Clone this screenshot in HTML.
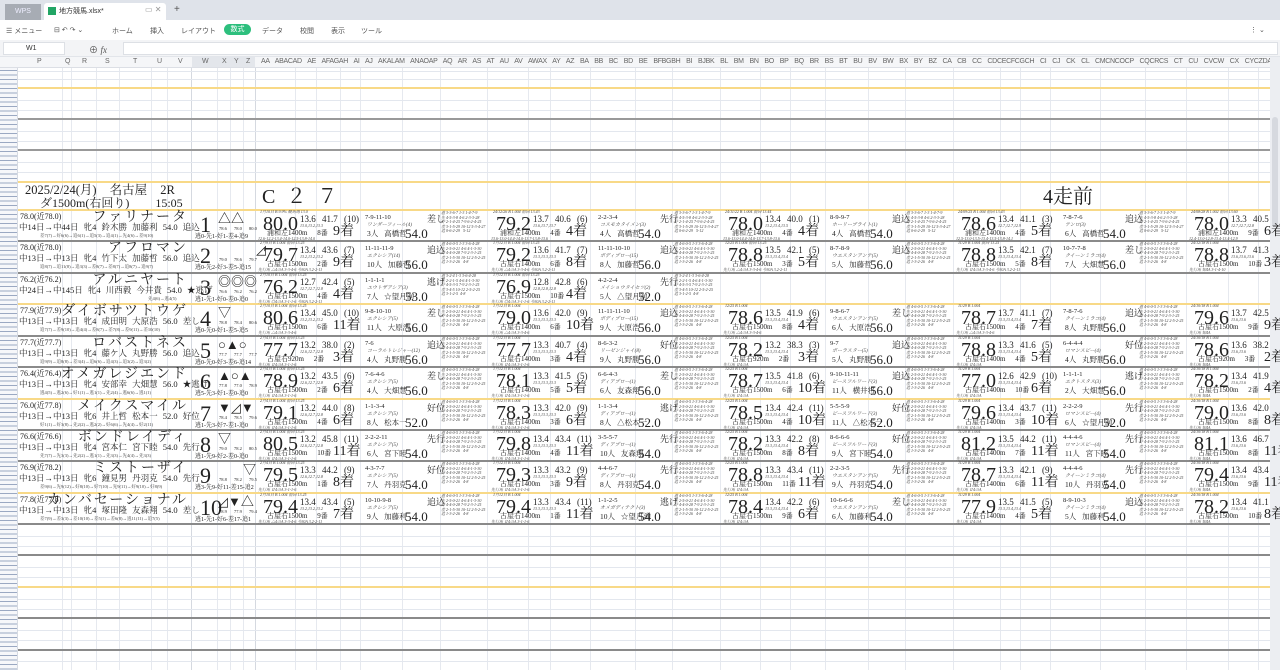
<!DOCTYPE html>
<html><head><meta charset="utf-8"><style>
*{margin:0;padding:0;box-sizing:border-box}
body{width:1280px;height:670px;overflow:hidden;background:#fff;font-family:"Liberation Sans","Noto Sans CJK JP",sans-serif;position:relative}
b{font-weight:normal}
.abs{position:absolute}
#tabs{left:0;top:0;width:1280px;height:20px;background:#dfe3ea}
#menu{left:0;top:20px;width:1280px;height:20px;background:#fff;font-size:7px;color:#555}
#menu span{position:absolute;top:6px}
#fx{left:0;top:40px;width:1280px;height:17px;background:#f3f4f6;border-bottom:1px solid #e2e5ea}
#colh{left:0;top:57px;width:1270px;height:11px;background:#f5f6f8;border-bottom:1px solid #dcdfe5;font-size:7px;color:#666;overflow:hidden;white-space:nowrap}
#colh span{position:absolute;top:1px}
#rown{left:0;top:68px;width:18px;height:602px;background:repeating-linear-gradient(#f6f7fa 0 2px,#9aa8c2 2px 3px,#f6f7fa 3px 4.5px);border-right:1px solid #d6dae2}
.hl{position:absolute;left:18px;width:1252px;height:1px;background:#e3e7ee}
.y{height:2px;background:#f8d987}
.g{height:2px;background:#8a8a8a}
.vl{position:absolute;top:68px;width:1px;height:602px;background:#e6e9ef}
.t{position:absolute;font-family:"Liberation Serif","Noto Serif CJK SC",serif;color:#222;white-space:nowrap;line-height:1}
.hr{position:absolute;left:18px;width:1252px;height:31px}
.hr .s1{left:2px;top:3px;font-size:8px}
.hr .nm{right:1082px;top:1px;font-size:14px;letter-spacing:2px}
.hr .no{left:182px;top:4px;font-size:22px}
.hr .mk{left:200px;top:2px;font-size:13px}
.hr .mv{left:201px;top:17px;font-size:4.5px;word-spacing:6px}
.hr .l2{left:1px;top:13px;font-size:8.5px;word-spacing:3px}
.hr .l3{left:22px;top:24px;font-size:4.5px;color:#444}
.hr .l4{left:177px;top:24px;font-size:6px}
.b{position:absolute;width:232px;height:31px;overflow:hidden}
.b .h{left:5px;top:0;font-size:4px;color:#444}
.b .r{left:8px;top:4px;font-size:20px}
.b .a{left:45px;top:5px;font-size:9px;word-spacing:4px}
.b .e{left:45px;top:14px;font-size:4px;color:#444}
.b .f{left:110px;top:5px;font-size:6.5px}
.b .gg{left:172px;top:5px;font-size:9px}
.b .k{left:112px;top:13px;font-size:5px;color:#444}
.b .l{left:12px;top:20px;font-size:7px;word-spacing:8px}
.b .n{left:78px;top:15px;font-size:14px}
.b .o{left:112px;top:20px;font-size:7.5px;word-spacing:4px}
.b .p{left:150px;top:17px;font-size:13px}
.b .q{left:3px;top:27px;font-size:4px;color:#444}
.b .z{left:186px;top:1px;width:46px;height:28px;font-size:4px;line-height:4.6px;color:#444;white-space:pre}
</style></head><body>
<div id="tabs" class="abs">
 <div class="abs" style="left:5px;top:4px;width:36px;height:16px;background:#a7acb4;color:#eef;font-size:7px;text-align:center;line-height:16px">WPS</div>
 <div class="abs" style="left:44px;top:3px;width:122px;height:17px;background:#fff;border-radius:3px 3px 0 0"></div>
 <div class="abs" style="left:48px;top:7px;width:8px;height:8px;background:#22a565"></div>
 <div class="abs" style="left:59px;top:6px;font-size:7px;color:#333">地方競馬.xlsx*</div>
 <div class="abs" style="left:145px;top:5px;font-size:8px;color:#999">▭ ✕</div>
 <div class="abs" style="left:174px;top:4px;font-size:10px;color:#555">+</div>
</div>
<div id="menu" class="abs">
 <span style="left:6px">☰ メニュー</span><span style="left:54px">⊟ ↶ ↷ ⌄</span>
 <span style="left:112px">ホーム</span><span style="left:150px">挿入</span><span style="left:181px">レイアウト</span>
 <span style="left:224px;top:4px;width:27px;height:11px;background:#2dbf7d;border-radius:6px;color:#fff;text-align:center;line-height:11px">数式</span>
 <span style="left:262px">データ</span><span style="left:300px">校閲</span><span style="left:331px">表示</span><span style="left:361px">ツール</span>
 <span style="left:1250px">⋮ ⌄</span>
</div>
<div id="fx" class="abs">
 <div class="abs" style="left:3px;top:2px;width:62px;height:13px;background:#fff;border:1px solid #dde0e5;font-size:7px;color:#333;padding-left:22px;line-height:11px">W1</div>
 <div class="abs" style="left:89px;top:3px;font-size:9px;color:#555">⊕ <i style="font-family:'Liberation Serif'">fx</i></div>
 <div class="abs" style="left:123px;top:2px;width:1155px;height:13px;background:#fff;border:1px solid #dde0e5"></div>
</div>
<div id="colh" class="abs">
 <div class="abs" style="left:192px;top:0;width:63px;height:11px;background:#e3e6eb;border-bottom:1.5px solid #2dbf7d"></div>
 <span style="left:37px">P</span><span style="left:65px">Q</span><span style="left:82px">R</span><span style="left:105px">S</span><span style="left:133px">T</span><span style="left:157px">U</span><span style="left:178px">V</span><span style="left:202px">W</span><span style="left:222px">X</span><span style="left:234px">Y</span><span style="left:246px">Z</span>
 <span style="left:261px;letter-spacing:-.3px;word-spacing:4.2px">AA ABACAD AE AFAGAH AI AJ AKALAM ANAOAP AQ AR AS AT AU AV AWAX AY AZ BA BB BC BD BE BFBGBH BI BJBK BL BM BN BO BP BQ BR BS BT BU BV BW BX BY BZ CA CB CC CDCECFCGCH CI CJ CK CL CMCNCOCP CQCRCS CT CU CVCW CX CYCZDADBDC DD DE DF DG DH DI DJ DK DLDMDN</span>
</div>
<div id="rown" class="abs"></div>
<div class="abs" style="left:1270px;top:57px;width:10px;height:613px;background:#eceef2"><div class="abs" style="left:2px;top:60px;width:6px;height:110px;background:#d6d9df;border-radius:3px"></div></div>

<div class="vl" style="left:62px"></div><div class="vl" style="left:71px"></div><div class="vl" style="left:96px"></div><div class="vl" style="left:119px"></div><div class="vl" style="left:151px"></div><div class="vl" style="left:167px"></div><div class="vl" style="left:191px;background:#d5d9e0"></div><div class="vl" style="left:217px"></div><div class="vl" style="left:230px"></div><div class="vl" style="left:243px"></div><div class="vl" style="left:255px;background:#d5d9e0"></div>
<div class="vl" style="left:295px"></div><div class="vl" style="left:316px"></div><div class="vl" style="left:340px"></div><div class="vl" style="left:360px"></div><div class="vl" style="left:402px"></div><div class="vl" style="left:440px"></div><div class="vl" style="left:487px"></div>
<div class="vl" style="left:528px"></div><div class="vl" style="left:550px"></div><div class="vl" style="left:590px"></div><div class="vl" style="left:635px"></div><div class="vl" style="left:672px"></div><div class="vl" style="left:720px"></div>
<div class="vl" style="left:760px"></div><div class="vl" style="left:790px"></div><div class="vl" style="left:825px"></div><div class="vl" style="left:868px"></div><div class="vl" style="left:905px"></div><div class="vl" style="left:953px"></div>
<div class="vl" style="left:1000px"></div><div class="vl" style="left:1020px"></div><div class="vl" style="left:1050px"></div><div class="vl" style="left:1100px"></div><div class="vl" style="left:1145px"></div><div class="vl" style="left:1186px"></div><div class="vl" style="left:1228px"></div><div class="vl" style="left:1258px"></div>

<div class="hl" style="top:71px"></div><div class="hl" style="top:79px"></div><div class="hl" style="top:100px"></div><div class="hl" style="top:110px"></div><div class="hl" style="top:131px"></div><div class="hl" style="top:141px"></div><div class="hl" style="top:162px"></div><div class="hl" style="top:172px"></div>
<div class="hl" style="top:536px"></div><div class="hl" style="top:546px"></div><div class="hl" style="top:567px"></div><div class="hl" style="top:577px"></div><div class="hl" style="top:599px"></div><div class="hl" style="top:609px"></div><div class="hl" style="top:630px"></div><div class="hl" style="top:640px"></div><div class="hl" style="top:661px"></div>

<div class="hl y" style="top:87px"></div><div class="hl g" style="top:118px;background:#999"></div><div class="hl g" style="top:149px;background:#999"></div><div class="hl y" style="top:181px"></div>
<div class="hl y" style="top:209px"></div><div class="hl g" style="top:240px"></div><div class="hl g" style="top:272px"></div><div class="hl y" style="top:303px"></div><div class="hl g" style="top:335px"></div><div class="hl g" style="top:366px"></div><div class="hl y" style="top:398px"></div><div class="hl g" style="top:429px"></div><div class="hl g" style="top:460px"></div><div class="hl y" style="top:492px"></div><div class="hl g" style="top:523px"></div><div class="hl g" style="top:554px"></div><div class="hl y" style="top:586px"></div><div class="hl g" style="top:617px"></div><div class="hl g" style="top:649px"></div>

<div class="t" style="left:25px;top:184px;font-size:12.5px;word-spacing:10px">2025/2/24(月) 名古屋 2R</div>
<div class="t" style="left:40px;top:197px;font-size:12px">ダ1500m(右回り)<span style="margin-left:26px">15:05</span></div>
<div class="t" style="left:262px;top:187px;font-size:20px;letter-spacing:11px">C２７</div>
<div class="t" style="left:1043px;top:187px;font-size:20px">4走前</div>

<div class="hr" style="top:210px"><span class="t s1">78.0(近78.0)</span><span class="t nm">ファリナータ</span><span class="t no">1</span><span class="t mk">△△</span><span class="t mv">78.6 78.0 80.0</span><span class="t l2">中14日→中44日 牝4 鈴木勝 加藤利 54.0 追込</span><span class="t l3">差7(7)→好6(6)→追6(1)→追5(3)→追4(1)→先4(6)→差9(10)</span><span class="t l4">逃0-先1-好1-差4-追9</span></div>
<div class="hr" style="top:241px"><span class="t s1">78.0(近78.0)</span><span class="t nm">アフロマン</span><span class="t no">2</span><span class="t mk" style="left:238px">◿</span><span class="t mv">79.0 78.6 79.7</span><span class="t l2">中13日→中13日 牝4 竹下太 加藤哲 56.0 追込</span><span class="t l3">追8(7)→追11(8)→追3(3)→差8(7)→差8(7)→追8(7)→追9(7)</span><span class="t l4">逃0-先2-好3-差5-追15</span></div>
<div class="hr" style="top:273px"><span class="t s1">76.2(近76.2)</span><span class="t nm">アルニヤート</span><span class="t no">3</span><span class="t mk">◎◎◎</span><span class="t mv">76.6 76.2 76.2</span><span class="t l2">中24日→中145日 牝4 川西毅 今井貴 54.0 ★逃げ</span><span class="t l3" style="left:130px">先4(6)→逃4(5)</span><span class="t l4">逃1-先1-好0-差0-追0</span></div>
<div class="hr" style="top:304px"><span class="t s1">77.9(近77.9)</span><span class="t nm">ダイボサツトウゲ</span><span class="t no">4</span><span class="t mk">▽</span><span class="t mv">78.8 78.4 80.6</span><span class="t l2">中13日→中13日 牝4 成田明 大原浩 56.0 差し</span><span class="t l3">追7(7)→差9(10)→追4(4)→差8(7)→差7(8)→差9(11)→差10(10)</span><span class="t l4">逃0-先0-好1-差5-追5</span></div>
<div class="hr" style="top:336px"><span class="t s1">77.7(近77.7)</span><span class="t nm">ロバストネス</span><span class="t no">5</span><span class="t mk">○▲○</span><span class="t mv">77.7 77.7 77.7</span><span class="t l2">中13日→中13日 牝4 藤ケ人 丸野勝 56.0 追込</span><span class="t l3">追9(9)→追8(8)→差3(4)→追6(6)→追4(3)→追3(2)→追3(2)</span><span class="t l4">逃0-先0-好3-差6-追14</span></div>
<div class="hr" style="top:367px"><span class="t s1">76.4(近76.4)</span><span class="t nm">オメガレジエンド</span><span class="t no">6</span><span class="t mk">▲○▲</span><span class="t mv">77.8 77.0 78.9</span><span class="t l2">中13日→中13日 牝4 安部幸 大畑慧 56.0 ★逃げ</span><span class="t l3">逃4(5)→逃2(6)→好1(1)→逃1(1)→先2(4)→逃6(6)→逃1(1)</span><span class="t l4">逃5-先3-好1-差0-追0</span></div>
<div class="hr" style="top:399px"><span class="t s1">76.0(近77.8)</span><span class="t nm">メイクスマイル</span><span class="t no">7</span><span class="t mk">▼◿▼</span><span class="t mv">78.4 78.5 79.6</span><span class="t l2">中13日→中13日 牝6 井上哲 松本一 52.0 好位</span><span class="t l3">好1(1)→好3(8)→先2(2)→逃2(2)→好6(6)→先4(4)→好2(11)</span><span class="t l4">逃1-先3-好7-差1-追0</span></div>
<div class="hr" style="top:430px"><span class="t s1">76.6(近76.6)</span><span class="t nm">ボンドレイディ</span><span class="t no">8</span><span class="t mk">▽</span><span class="t mv">79.0 78.2 80.5</span><span class="t l2">中13日→中13日 牝4 宮本仁 宮下睦 54.0 先行</span><span class="t l3">先7(7)→先3(3)→先2(2)→逃1(1)→先3(3)→先4(4)→先3(3)</span><span class="t l4">逃1-先9-好2-差0-追0</span></div>
<div class="hr" style="top:461px"><span class="t s1">76.9(近78.2)</span><span class="t nm">ミストーザイ</span><span class="t no">9</span><span class="t mk" style="left:225px">▽</span><span class="t mv">78.8 78.2 79.5</span><span class="t l2">中13日→中13日 牝6 鐘見男 丹羽克 54.0 先行</span><span class="t l3">差9(6)→先9(12)→好8(10)→好7(10)→先9(11)→好9(10)→好8(9)</span><span class="t l4">逃3-先9-好11-差15-追2</span></div>
<div class="hr" style="top:493px"><span class="t s1">77.8(近77.8)</span><span class="t nm">カンバセーショナル</span><span class="t no">10</span><span class="t mk">◿▼△</span><span class="t mv">78.9 77.9 79.4</span><span class="t l2">中13日→中13日 牝4 塚田隆 友森翔 54.0 差し</span><span class="t l3">差7(9)→差3(3)→差10(10)→差5(1)→差6(8)→逃11(11)→追7(5)</span><span class="t l4">逃1-先1-好6-差17-追1</span></div>

<div class="b" style="left:255px;top:210px"><i class="t h">1月10日 B 9.9% 競馬場 13.0</i><b class="t r">80.0</b><span class="t a">13.6 41.7 (10)</span><i class="t e">13.0,13.2,13.3</i><span class="t f">7-9-11-10</span><span class="t gg">差し</span><i class="t k">ワンダーフィール(4)</i><span class="t l">浦和左1400m 8番</span><b class="t n">9着</b><span class="t o">3人 高橋哲</span><b class="t p">54.0</b><i class="t q">12.6-12.2-13.4-14.0-12.5-13.8-14.0</i><i class="t z">逃 3-3-6-7 1-3 1-4-7-9
先 4-5-3-8 4-6 2-3-3-28
好 2-1-4-25 7-9 6-2-4-25
差 3-1-5-29 10-12 5-3-4-27
追 0-6-2-29   5-12</i></div>
<div class="b" style="left:488px;top:210px"><i class="t h">24/12/26 B 1.004 前回 13.43</i><b class="t r">79.2</b><span class="t a">13.7 40.6 (6)</span><i class="t e">13.6,13.7,13.7</i><span class="t f">2-2-3-4</span><span class="t gg">先行</span><i class="t k">コスモカタイメン(3)</i><span class="t l">浦和左1400m 4番</span><b class="t n">4着</b><span class="t o">4人 高橋哲</span><b class="t p">54.0</b><i class="t q">13.6-13.0-14.4-14.0-13.7-13.8-13.6</i><i class="t z">逃 3-3-6-7 1-3 1-4-7-9
先 4-5-3-8 4-6 2-3-3-28
好 2-1-4-25 7-9 6-2-4-25
差 3-1-5-29 10-12 5-3-4-27
追 0-6-2-29   5-12</i></div>
<div class="b" style="left:720px;top:210px"><i class="t h">24/11/22 B 1.004 前回 13.44</i><b class="t r">78.0</b><span class="t a">13.4 40.0 (1)</span><i class="t e">13.2,13.4,13.5</i><span class="t f">8-9-9-7</span><span class="t gg">追込</span><i class="t k">ホーリーブライト(1)</i><span class="t l">浦和左1400m 4番</span><b class="t n">4着</b><span class="t o">4人 高橋哲</span><b class="t p">54.0</b><i class="t q">13.6-13.0-14.4-14.0-13.7-13.8-13.6</i><i class="t z">逃 3-3-6-7 1-3 1-4-7-9
先 4-5-3-8 4-6 2-3-3-28
好 2-1-4-25 7-9 6-2-4-25
差 3-1-5-29 10-12 5-3-4-27
追 0-6-2-29   5-12</i></div>
<div class="b" style="left:953px;top:210px"><i class="t h">24/09/25 B 1.004 前回 13.43</i><b class="t r">78.6</b><span class="t a">13.4 41.1 (3)</span><i class="t e">12.7,12.7,12.9</i><span class="t f">7-8-7-6</span><span class="t gg">追込</span><i class="t k">テンロ(3)</i><span class="t l">浦和左1400m 4番</span><b class="t n">5着</b><span class="t o">6人 高橋哲</span><b class="t p">54.0</b><i class="t q">12.5-13.0-13.5-13.4-13.5-13.8-14.1</i><i class="t z">逃 3-3-6-7 1-3 1-4-7-9
先 4-5-3-8 4-6 2-3-3-28
好 2-1-4-25 7-9 6-2-4-25
差 3-1-5-29 10-12 5-3-4-27
追 0-6-2-29   5-12</i></div>
<div class="b" style="left:1186px;top:210px"><i class="t h">24/08/28 B 1.002 前回 13.60</i><b class="t r">78.0</b><span class="t a">13.3 40.5</span><i class="t e">12.7,12.7,12.8</i><span class="t l">浦和左1400m 9番</span><b class="t n">6着</b><i class="t q">12.4-13.0-12.8-13.4-13.4-12.9</i></div>

<div class="b" style="left:255px;top:241px"><i class="t h">2月9日 B 1.004 前回 13.25</i><b class="t r">79.7</b><span class="t a">13.4 43.6 (7)</span><i class="t e">13.2,13.2,13.2</i><span class="t f">11-11-11-9</span><span class="t gg">追込</span><i class="t k">エクレシア(14)</i><span class="t l">古屋右1500m 2番</span><b class="t n">9着</b><span class="t o">10人 加藤哲</span><b class="t p">56.0</b><i class="t q">先行馬 △4のA 3-3-4-6 今30A 3.2-2-11</i><i class="t z">逃 4-6-0-5 1-3 3-6-4-28
先 2-5-0-21 4-6 4-1-3-30
好 4-4-0-28 7-9 2-3-1-25
差 2-1-5-30 10-12 2-5-2-25
追 1-3-2-26   4-8</i></div>
<div class="b" style="left:488px;top:241px"><i class="t h">1月12日 B 1.004 前回 13.25</i><b class="t r">79.2</b><span class="t a">13.6 41.7 (7)</span><i class="t e">13.3,13.3,13.3</i><span class="t f">11-11-10-10</span><span class="t gg">追込</span><i class="t k">ボディプロー(15)</i><span class="t l">古屋右1400m 6番</span><b class="t n">8着</b><span class="t o">8人 加藤哲</span><b class="t p">56.0</b><i class="t q">先行馬 △4のA 3-3-4-6 今30A 3.2-2-11</i><i class="t z">逃 4-6-0-5 1-3 3-6-4-28
先 2-5-0-21 4-6 4-1-3-30
好 4-4-0-28 7-9 2-3-1-25
差 2-1-5-30 10-12 2-5-2-25
追 1-3-2-26   4-8</i></div>
<div class="b" style="left:720px;top:241px"><i class="t h">12/25 B 1.004 前回 13.25</i><b class="t r">78.8</b><span class="t a">13.5 42.1 (5)</span><i class="t e">13.3,13.4,13.4</i><span class="t f">8-7-8-9</span><span class="t gg">追込</span><i class="t k">ウエスタンアンテ(5)</i><span class="t l">古屋右1500m 3番</span><b class="t n">5着</b><span class="t o">5人 加藤哲</span><b class="t p">56.0</b><i class="t q">先行馬 △4のA 3-3-4-6 今30A 3.2-2-11</i><i class="t z">逃 4-6-0-5 1-3 3-6-4-28
先 2-5-0-21 4-6 4-1-3-30
好 4-4-0-28 7-9 2-3-1-25
差 2-1-5-30 10-12 2-5-2-25
追 1-3-2-26   4-8</i></div>
<div class="b" style="left:953px;top:241px"><i class="t h">11/29 B 1.004 前回 13.25</i><b class="t r">78.8</b><span class="t a">13.5 42.1 (7)</span><i class="t e">13.3,13.4,13.4</i><span class="t f">10-7-7-8</span><span class="t gg">差し</span><i class="t k">クイーンミラコ(4)</i><span class="t l">古屋右1500m 5番</span><b class="t n">8着</b><span class="t o">7人 大畑慧</span><b class="t p">56.0</b><i class="t q">先行馬 Ⅱ4のA 3-3-4-6 今30A 3.2-2-11</i><i class="t z">逃 4-6-0-5 1-3 3-6-4-28
先 2-5-0-21 4-6 4-1-3-30
好 4-4-0-28 7-9 2-3-1-25
差 2-1-5-30 10-12 2-5-2-25
追 1-3-2-26   4-8</i></div>
<div class="b" style="left:1186px;top:241px"><i class="t h">24/12/18 B 1.004</i><b class="t r">78.8</b><span class="t a">13.7 41.3</span><i class="t e">13.6,13.6,13.6</i><span class="t l">古屋右1500m 10番</span><b class="t n">3着</b><i class="t q">先行馬 知4A 3-1-4-10</i></div>

<div class="b" style="left:255px;top:273px"><i class="t h">2月10日 B 1.004 前回 13.25</i><b class="t r">76.2</b><span class="t a">12.7 42.4 (5)</span><i class="t e">12.7,12.7,12.8</i><span class="t f">1-1-1-1</span><span class="t gg">逃げ</span><i class="t k">ユウトザアシア(3)</i><span class="t l">古屋右1500m 4番</span><b class="t n">4着</b><span class="t o">7人 ☆望月洵</span><b class="t p">53.0</b><i class="t q">先行馬 ◎4のA 3-1-1-6 今30A 3.2-2-11</i><i class="t z">逃 3-2-4 1-3 3-6-4-28
先 2-2-1-5 4-6 4-1-3-30
好 4-5-3-5 7-9 2-3-1-25
差 3-4-5 10-12 2-5-2-25
追 3-1-2-5  4-8</i></div>
<div class="b" style="left:488px;top:273px"><i class="t h">1月12日 B 1.004 前回 13.25</i><b class="t r">76.9</b><span class="t a">12.8 42.8 (6)</span><i class="t e">12.8,12.8,12.8</i><span class="t f">4-2-2-4</span><span class="t gg">先行</span><i class="t k">メイショウタイセツ(2)</i><span class="t l">古屋右1500m 10番</span><b class="t n">4着</b><span class="t o">5人 △望月洵</span><b class="t p">52.0</b><i class="t q">先行馬 ◎4のA 3-1-1-6 今30A 3.2-2-11</i><i class="t z">逃 3-2-4 1-3 3-6-4-28
先 2-2-1-5 4-6 4-1-3-30
好 4-5-3-5 7-9 2-3-1-25
差 3-4-5 10-12 2-5-2-25
追 3-1-2-5  4-8</i></div>

<div class="b" style="left:255px;top:304px"><i class="t h">2月10日 B 1.004 前回 13.25</i><b class="t r">80.6</b><span class="t a">13.4 45.0 (10)</span><i class="t e">13.2,13.2,13.2</i><span class="t f">9-8-10-10</span><span class="t gg">差し</span><i class="t k">エクレシア(5)</i><span class="t l">古屋右1500m 6番</span><b class="t n">11着</b><span class="t o">11人 大原浩</span><b class="t p">56.0</b><i class="t q">先行馬 △4のA 3-3-4-6</i><i class="t z">逃 4-6-0-5 1-3 3-6-4-28
先 2-5-0-21 4-6 4-1-3-30
好 4-4-0-28 7-9 2-3-1-25
差 2-1-5-30 10-12 2-5-2-25
追 1-3-2-26   4-8</i></div>
<div class="b" style="left:488px;top:304px"><i class="t h">1月12日 B 1.004</i><b class="t r">79.0</b><span class="t a">13.6 42.0 (9)</span><i class="t e">13.3,13.3,13.3</i><span class="t f">11-11-11-10</span><span class="t gg">追込</span><i class="t k">ボディプロー(15)</i><span class="t l">古屋右1400m 6番</span><b class="t n">10着</b><span class="t o">9人 大原浩</span><b class="t p">56.0</b><i class="t q">先行馬 △4のA 3-3-4-6</i><i class="t z">逃 4-6-0-5 1-3 3-6-4-28
先 2-5-0-21 4-6 4-1-3-30
好 4-4-0-28 7-9 2-3-1-25
差 2-1-5-30 10-12 2-5-2-25
追 1-3-2-26   4-8</i></div>
<div class="b" style="left:720px;top:304px"><i class="t h">12/25 B 1.004</i><b class="t r">78.6</b><span class="t a">13.5 41.9 (6)</span><i class="t e">13.3,13.4,13.4</i><span class="t f">9-8-6-7</span><span class="t gg">差し</span><i class="t k">ウエスタンアンテ(5)</i><span class="t l">古屋右1500m 8番</span><b class="t n">4着</b><span class="t o">6人 大原浩</span><b class="t p">56.0</b><i class="t q">先行馬 △4のA 3-3-4-6</i><i class="t z">逃 4-6-0-5 1-3 3-6-4-28
先 2-5-0-21 4-6 4-1-3-30
好 4-4-0-28 7-9 2-3-1-25
差 2-1-5-30 10-12 2-5-2-25
追 1-3-2-26   4-8</i></div>
<div class="b" style="left:953px;top:304px"><i class="t h">11/29 B 1.004</i><b class="t r">78.7</b><span class="t a">13.7 41.1 (7)</span><i class="t e">13.3,13.4,13.4</i><span class="t f">7-8-7-6</span><span class="t gg">追込</span><i class="t k">クイーンミラコ(4)</i><span class="t l">古屋右1500m 4番</span><b class="t n">7着</b><span class="t o">8人 丸野勝</span><b class="t p">56.0</b><i class="t q">先行馬 △4のA 3-3-4-6</i><i class="t z">逃 4-6-0-5 1-3 3-6-4-28
先 2-5-0-21 4-6 4-1-3-30
好 4-4-0-28 7-9 2-3-1-25
差 2-1-5-30 10-12 2-5-2-25
追 1-3-2-26   4-8</i></div>
<div class="b" style="left:1186px;top:304px"><i class="t h">24/10/18 B 1.004</i><b class="t r">79.6</b><span class="t a">13.7 42.5</span><i class="t e">13.6,13.6</i><span class="t l">古屋右1500m 9番</span><b class="t n">9着</b><i class="t q">先行馬 知4A</i></div>

<div class="b" style="left:255px;top:336px"><i class="t h">2月4日 B 1.004 前回 13.25</i><b class="t r">77.7</b><span class="t a">13.2 38.0 (2)</span><i class="t e">12.6,12.7,12.8</i><span class="t f">7-6</span><span class="t gg">追込</span><i class="t k">コーラルトレジャー(12)</i><span class="t l">古屋右920m 2番</span><b class="t n">3着</b><span class="t o">4人 丸野勝</span><b class="t p">56.0</b><i class="t q">先行馬 Ⅱ4のA 3-1-1-6</i><i class="t z">逃 4-6-0-5 1-3 3-6-4-28
先 2-5-0-21 4-6 4-1-3-30
好 4-4-0-28 7-9 2-3-1-25
差 2-1-5-30 10-12 2-5-2-25
追 1-3-2-26   4-8</i></div>
<div class="b" style="left:488px;top:336px"><i class="t h">1月12日 B 1.004</i><b class="t r">77.7</b><span class="t a">13.3 40.7 (4)</span><i class="t e">13.3,13.3,13.3</i><span class="t f">8-6-3-2</span><span class="t gg">好位</span><i class="t k">リーゼンジャイ(8)</i><span class="t l">古屋右1400m 3番</span><b class="t n">4着</b><span class="t o">9人 丸野勝</span><b class="t p">56.0</b><i class="t q">先行馬 Ⅱ4のA 3-1-1-6</i><i class="t z">逃 4-6-0-5 1-3 3-6-4-28
先 2-5-0-21 4-6 4-1-3-30
好 4-4-0-28 7-9 2-3-1-25
差 2-1-5-30 10-12 2-5-2-25
追 1-3-2-26   4-8</i></div>
<div class="b" style="left:720px;top:336px"><i class="t h">12/25 B 1.004</i><b class="t r">78.2</b><span class="t a">13.2 38.3 (3)</span><i class="t e">13.3,13.4,13.4</i><span class="t f">9-7</span><span class="t gg">追込</span><i class="t k">ボーラスター(5)</i><span class="t l">古屋右920m 2番</span><b class="t n">3着</b><span class="t o">5人 丸野勝</span><b class="t p">56.0</b><i class="t q">先行馬 Ⅱ4のA</i><i class="t z">逃 4-6-0-5 1-3 3-6-4-28
先 2-5-0-21 4-6 4-1-3-30
好 4-4-0-28 7-9 2-3-1-25
差 2-1-5-30 10-12 2-5-2-25
追 1-3-2-26   4-8</i></div>
<div class="b" style="left:953px;top:336px"><i class="t h">11/29 B 1.004</i><b class="t r">78.8</b><span class="t a">13.3 41.6 (5)</span><i class="t e">13.3,13.4,13.4</i><span class="t f">6-4-4-4</span><span class="t gg">好位</span><i class="t k">ロマンスビー(4)</i><span class="t l">古屋右1400m 4番</span><b class="t n">5着</b><span class="t o">4人 丸野勝</span><b class="t p">56.0</b><i class="t q">先行馬 Ⅱ4のA</i><i class="t z">逃 4-6-0-5 1-3 3-6-4-28
先 2-5-0-21 4-6 4-1-3-30
好 4-4-0-28 7-9 2-3-1-25
差 2-1-5-30 10-12 2-5-2-25
追 1-3-2-26   4-8</i></div>
<div class="b" style="left:1186px;top:336px"><i class="t h">24/10/18 B 1.004</i><b class="t r">78.6</b><span class="t a">13.6 38.2</span><i class="t e">13.6,13.6</i><span class="t l">古屋右920m 3番</span><b class="t n">2着</b><i class="t q">先行馬 知4A</i></div>

<div class="b" style="left:255px;top:367px"><i class="t h">2月4日 B 1.004 前回 13.25</i><b class="t r">78.9</b><span class="t a">13.2 43.5 (6)</span><i class="t e">12.6,12.7,12.8</i><span class="t f">7-6-4-6</span><span class="t gg">差し</span><i class="t k">エクレシア(5)</i><span class="t l">古屋右1500m 2番</span><b class="t n">6着</b><span class="t o">4人 大畑慧</span><b class="t p">56.0</b><i class="t q">先行馬 Ⅱ4のA 3-1-1-6</i><i class="t z">逃 4-6-0-5 1-3 3-6-4-28
先 2-5-0-21 4-6 4-1-3-30
好 4-4-0-28 7-9 2-3-1-25
差 2-1-5-30 10-12 2-5-2-25
追 1-3-2-26   4-8</i></div>
<div class="b" style="left:488px;top:367px"><i class="t h">1月12日 B 1.004</i><b class="t r">78.1</b><span class="t a">13.3 41.5 (5)</span><i class="t e">13.3,13.3,13.3</i><span class="t f">6-6-4-3</span><span class="t gg">差し</span><i class="t k">ディアプロー(1)</i><span class="t l">古屋右1400m 5番</span><b class="t n">5着</b><span class="t o">6人 友森翔</span><b class="t p">56.0</b><i class="t q">先行馬 Ⅱ4のA 3-1-1-6</i><i class="t z">逃 4-6-0-5 1-3 3-6-4-28
先 2-5-0-21 4-6 4-1-3-30
好 4-4-0-28 7-9 2-3-1-25
差 2-1-5-30 10-12 2-5-2-25
追 1-3-2-26   4-8</i></div>
<div class="b" style="left:720px;top:367px"><i class="t h">12/25 B 1.004</i><b class="t r">78.7</b><span class="t a">13.5 41.8 (6)</span><i class="t e">13.3,13.4,13.4</i><span class="t f">9-10-11-11</span><span class="t gg">追込</span><i class="t k">ビースフルワード(3)</i><span class="t l">古屋右1500m 6番</span><b class="t n">10着</b><span class="t o">11人 横井将</span><b class="t p">56.0</b><i class="t q">先行馬 Ⅱ4のA</i><i class="t z">逃 4-6-0-5 1-3 3-6-4-28
先 2-5-0-21 4-6 4-1-3-30
好 4-4-0-28 7-9 2-3-1-25
差 2-1-5-30 10-12 2-5-2-25
追 1-3-2-26   4-8</i></div>
<div class="b" style="left:953px;top:367px"><i class="t h">11/29 B 1.004</i><b class="t r">77.0</b><span class="t a">12.6 42.9 (10)</span><i class="t e">13.3,13.4,13.4</i><span class="t f">1-1-1-1</span><span class="t gg">逃げ</span><i class="t k">エクトスタス(3)</i><span class="t l">古屋右1400m 10番</span><b class="t n">6着</b><span class="t o">2人 大畑慧</span><b class="t p">56.0</b><i class="t q">先行馬 Ⅱ4のA</i><i class="t z">逃 4-6-0-5 1-3 3-6-4-28
先 2-5-0-21 4-6 4-1-3-30
好 4-4-0-28 7-9 2-3-1-25
差 2-1-5-30 10-12 2-5-2-25
追 1-3-2-26   4-8</i></div>
<div class="b" style="left:1186px;top:367px"><i class="t h">24/10/18 B 1.004</i><b class="t r">78.2</b><span class="t a">13.4 41.9</span><i class="t e">13.6,13.6</i><span class="t l">古屋右1500m 2番</span><b class="t n">4着</b><i class="t q">先行馬 知4A</i></div>

<div class="b" style="left:255px;top:399px"><i class="t h">2月4日 B 1.004 前回 13.25</i><b class="t r">79.1</b><span class="t a">13.2 44.0 (8)</span><i class="t e">12.6,12.7,12.8</i><span class="t f">1-1-3-4</span><span class="t gg">好位</span><i class="t k">エクレシア(5)</i><span class="t l">古屋右1500m 4番</span><b class="t n">6着</b><span class="t o">8人 松本一</span><b class="t p">52.0</b><i class="t q">先行馬 Ⅱ4のA 3-1-1-6</i><i class="t z">逃 4-6-0-5 1-3 3-6-4-28
先 2-5-0-21 4-6 4-1-3-30
好 4-4-0-28 7-9 2-3-1-25
差 2-1-5-30 10-12 2-5-2-25
追 1-3-2-26   4-8</i></div>
<div class="b" style="left:488px;top:399px"><i class="t h">1月12日 B 1.004</i><b class="t r">78.3</b><span class="t a">13.3 42.0 (9)</span><i class="t e">13.3,13.3,13.3</i><span class="t f">1-1-3-4</span><span class="t gg">逃げ</span><i class="t k">ディアプロー(1)</i><span class="t l">古屋右1400m 3番</span><b class="t n">6着</b><span class="t o">8人 △松本一</span><b class="t p">52.0</b><i class="t q">先行馬 Ⅱ4のA 3-1-1-6</i><i class="t z">逃 4-6-0-5 1-3 3-6-4-28
先 2-5-0-21 4-6 4-1-3-30
好 4-4-0-28 7-9 2-3-1-25
差 2-1-5-30 10-12 2-5-2-25
追 1-3-2-26   4-8</i></div>
<div class="b" style="left:720px;top:399px"><i class="t h">12/25 B 1.004</i><b class="t r">78.5</b><span class="t a">13.4 42.4 (11)</span><i class="t e">13.3,13.4,13.4</i><span class="t f">5-5-5-9</span><span class="t gg">好位</span><i class="t k">ビースフルワード(3)</i><span class="t l">古屋右1500m 4番</span><b class="t n">10着</b><span class="t o">11人 △松本一</span><b class="t p">52.0</b><i class="t q">先行馬 Ⅱ4のA</i><i class="t z">逃 4-6-0-5 1-3 3-6-4-28
先 2-5-0-21 4-6 4-1-3-30
好 4-4-0-28 7-9 2-3-1-25
差 2-1-5-30 10-12 2-5-2-25
追 1-3-2-26   4-8</i></div>
<div class="b" style="left:953px;top:399px"><i class="t h">11/29 B 1.004</i><b class="t r">79.6</b><span class="t a">13.4 43.7 (11)</span><i class="t e">13.3,13.4,13.4</i><span class="t f">2-2-2-9</span><span class="t gg">先行</span><i class="t k">ロマンスビー(4)</i><span class="t l">古屋右1400m 3番</span><b class="t n">10着</b><span class="t o">6人 ☆望月洵</span><b class="t p">52.0</b><i class="t q">先行馬 Ⅱ4のA</i><i class="t z">逃 4-6-0-5 1-3 3-6-4-28
先 2-5-0-21 4-6 4-1-3-30
好 4-4-0-28 7-9 2-3-1-25
差 2-1-5-30 10-12 2-5-2-25
追 1-3-2-26   4-8</i></div>
<div class="b" style="left:1186px;top:399px"><i class="t h">24/10/18 B 1.004</i><b class="t r">79.0</b><span class="t a">13.6 42.0</span><i class="t e">13.6,13.6</i><span class="t l">古屋右1500m 8番</span><b class="t n">8着</b><i class="t q">先行馬 知4A</i></div>

<div class="b" style="left:255px;top:430px"><i class="t h">2月4日 B 1.004 前回 13.25</i><b class="t r">80.5</b><span class="t a">13.2 45.8 (11)</span><i class="t e">12.6,12.7,12.8</i><span class="t f">2-2-2-11</span><span class="t gg">先行</span><i class="t k">エクレシア(5)</i><span class="t l">古屋右1500m 10番</span><b class="t n">11着</b><span class="t o">6人 宮下睦</span><b class="t p">54.0</b><i class="t q">先行馬 Ⅱ4のA 3-1-1-6</i><i class="t z">逃 4-6-0-5 1-3 3-6-4-28
先 2-5-0-21 4-6 4-1-3-30
好 4-4-0-28 7-9 2-3-1-25
差 2-1-5-30 10-12 2-5-2-25
追 1-3-2-26   4-8</i></div>
<div class="b" style="left:488px;top:430px"><i class="t h">1月12日 B 1.004</i><b class="t r">79.8</b><span class="t a">13.4 43.4 (11)</span><i class="t e">13.3,13.3,13.3</i><span class="t f">3-5-5-7</span><span class="t gg">先行</span><i class="t k">ディアプロー(1)</i><span class="t l">古屋右1400m 4番</span><b class="t n">11着</b><span class="t o">10人 友森翔</span><b class="t p">54.0</b><i class="t q">先行馬 Ⅱ4のA 3-1-1-6</i><i class="t z">逃 4-6-0-5 1-3 3-6-4-28
先 2-5-0-21 4-6 4-1-3-30
好 4-4-0-28 7-9 2-3-1-25
差 2-1-5-30 10-12 2-5-2-25
追 1-3-2-26   4-8</i></div>
<div class="b" style="left:720px;top:430px"><i class="t h">12/25 B 1.004</i><b class="t r">78.2</b><span class="t a">13.3 42.2 (8)</span><i class="t e">13.3,13.4,13.4</i><span class="t f">8-6-6-6</span><span class="t gg">好位</span><i class="t k">ビースフルワード(3)</i><span class="t l">古屋右1500m 8番</span><b class="t n">8着</b><span class="t o">9人 宮下睦</span><b class="t p">54.0</b><i class="t q">先行馬 Ⅱ4のA</i><i class="t z">逃 4-6-0-5 1-3 3-6-4-28
先 2-5-0-21 4-6 4-1-3-30
好 4-4-0-28 7-9 2-3-1-25
差 2-1-5-30 10-12 2-5-2-25
追 1-3-2-26   4-8</i></div>
<div class="b" style="left:953px;top:430px"><i class="t h">11/29 B 1.004</i><b class="t r">81.2</b><span class="t a">13.5 44.2 (11)</span><i class="t e">13.3,13.4,13.4</i><span class="t f">4-4-4-6</span><span class="t gg">先行</span><i class="t k">ロマンスビー(4)</i><span class="t l">古屋右1400m 7番</span><b class="t n">11着</b><span class="t o">11人 宮下睦</span><b class="t p">54.0</b><i class="t q">先行馬 Ⅱ4のA</i><i class="t z">逃 4-6-0-5 1-3 3-6-4-28
先 2-5-0-21 4-6 4-1-3-30
好 4-4-0-28 7-9 2-3-1-25
差 2-1-5-30 10-12 2-5-2-25
追 1-3-2-26   4-8</i></div>
<div class="b" style="left:1186px;top:430px"><i class="t h">24/10/18 B 1.004</i><b class="t r">81.1</b><span class="t a">13.6 46.7</span><i class="t e">13.6,13.6</i><span class="t l">古屋右1500m 8番</span><b class="t n">11着</b><i class="t q">先行馬 知4A</i></div>

<div class="b" style="left:255px;top:461px"><i class="t h">2月4日 B 1.004 前回 13.25</i><b class="t r">79.5</b><span class="t a">13.3 44.2 (9)</span><i class="t e">12.6,12.7,12.8</i><span class="t f">4-3-7-7</span><span class="t gg">好位</span><i class="t k">エクレシア(5)</i><span class="t l">古屋右1500m 1番</span><b class="t n">8着</b><span class="t o">7人 丹羽克</span><b class="t p">54.0</b><i class="t q">先行馬 Ⅱ4のA 3-1-1-6</i><i class="t z">逃 4-6-0-5 1-3 3-6-4-28
先 2-5-0-21 4-6 4-1-3-30
好 4-4-0-28 7-9 2-3-1-25
差 2-1-5-30 10-12 2-5-2-25
追 1-3-2-26   4-8</i></div>
<div class="b" style="left:488px;top:461px"><i class="t h">1月12日 B 1.004</i><b class="t r">79.3</b><span class="t a">13.3 43.2 (9)</span><i class="t e">13.3,13.3,13.3</i><span class="t f">4-4-6-7</span><span class="t gg">先行</span><i class="t k">ディアプロー(1)</i><span class="t l">古屋右1400m 3番</span><b class="t n">9着</b><span class="t o">8人 丹羽克</span><b class="t p">54.0</b><i class="t q">先行馬 Ⅱ4のA 3-1-1-6</i><i class="t z">逃 4-6-0-5 1-3 3-6-4-28
先 2-5-0-21 4-6 4-1-3-30
好 4-4-0-28 7-9 2-3-1-25
差 2-1-5-30 10-12 2-5-2-25
追 1-3-2-26   4-8</i></div>
<div class="b" style="left:720px;top:461px"><i class="t h">12/25 B 1.004</i><b class="t r">78.8</b><span class="t a">13.3 43.4 (11)</span><i class="t e">13.3,13.4,13.4</i><span class="t f">2-2-3-5</span><span class="t gg">先行</span><i class="t k">ウエスタンアンテ(5)</i><span class="t l">古屋右1500m 11番</span><b class="t n">11着</b><span class="t o">9人 丹羽克</span><b class="t p">54.0</b><i class="t q">先行馬 Ⅱ4のA</i><i class="t z">逃 4-6-0-5 1-3 3-6-4-28
先 2-5-0-21 4-6 4-1-3-30
好 4-4-0-28 7-9 2-3-1-25
差 2-1-5-30 10-12 2-5-2-25
追 1-3-2-26   4-8</i></div>
<div class="b" style="left:953px;top:461px"><i class="t h">11/29 B 1.004</i><b class="t r">78.7</b><span class="t a">13.3 42.1 (9)</span><i class="t e">13.3,13.4,13.4</i><span class="t f">4-4-4-6</span><span class="t gg">先行</span><i class="t k">クイーンミラコ(4)</i><span class="t l">古屋右1400m 6番</span><b class="t n">11着</b><span class="t o">10人 丹羽克</span><b class="t p">54.0</b><i class="t q">先行馬 Ⅱ4のA</i><i class="t z">逃 4-6-0-5 1-3 3-6-4-28
先 2-5-0-21 4-6 4-1-3-30
好 4-4-0-28 7-9 2-3-1-25
差 2-1-5-30 10-12 2-5-2-25
追 1-3-2-26   4-8</i></div>
<div class="b" style="left:1186px;top:461px"><i class="t h">24/10/18 B 1.004</i><b class="t r">79.4</b><span class="t a">13.4 43.4</span><i class="t e">13.6,13.6</i><span class="t l">古屋右1500m 9番</span><b class="t n">11着</b><i class="t q">先行馬 知4A</i></div>

<div class="b" style="left:255px;top:493px"><i class="t h">2月10日 B 1.004 前回 13.25</i><b class="t r">79.4</b><span class="t a">13.4 43.4 (5)</span><i class="t e">13.2,13.2,13.2</i><span class="t f">10-10-9-8</span><span class="t gg">追込</span><i class="t k">エクレシア(5)</i><span class="t l">古屋右1500m 9番</span><b class="t n">7着</b><span class="t o">9人 加藤利</span><b class="t p">54.0</b><i class="t q">先行馬 △4のA 3-3-4-6 今30A 3.2-2-11</i><i class="t z">逃 4-6-0-5 1-3 3-6-4-28
先 2-5-0-21 4-6 4-1-3-30
好 4-4-0-28 7-9 2-3-1-25
差 2-1-5-30 10-12 2-5-2-25
追 1-3-2-26   4-8</i></div>
<div class="b" style="left:488px;top:493px"><i class="t h">1月12日 B 1.004</i><b class="t r">79.4</b><span class="t a">13.3 43.4 (11)</span><i class="t e">13.3,13.3,13.3</i><span class="t f">1-1-2-5</span><span class="t gg">逃げ</span><i class="t k">オメガディテクト(3)</i><span class="t l">古屋右1400m 1番</span><b class="t n">11着</b><span class="t o">10人 ☆望月洵</span><b class="t p">54.0</b><i class="t q">先行馬 Ⅱ4のA 3-1-1-6</i><i class="t z">逃 4-6-0-5 1-3 3-6-4-28
先 2-5-0-21 4-6 4-1-3-30
好 4-4-0-28 7-9 2-3-1-25
差 2-1-5-30 10-12 2-5-2-25
追 1-3-2-26   4-8</i></div>
<div class="b" style="left:720px;top:493px"><i class="t h">12/25 B 1.004</i><b class="t r">78.4</b><span class="t a">13.4 42.2 (6)</span><i class="t e">13.3,13.4,13.4</i><span class="t f">10-6-6-6</span><span class="t gg">差し</span><i class="t k">ウエスタンアンテ(5)</i><span class="t l">古屋右1500m 9番</span><b class="t n">6着</b><span class="t o">6人 加藤利</span><b class="t p">54.0</b><i class="t q">先行馬 Ⅱ4のA</i><i class="t z">逃 4-6-0-5 1-3 3-6-4-28
先 2-5-0-21 4-6 4-1-3-30
好 4-4-0-28 7-9 2-3-1-25
差 2-1-5-30 10-12 2-5-2-25
追 1-3-2-26   4-8</i></div>
<div class="b" style="left:953px;top:493px"><i class="t h">11/29 B 1.004</i><b class="t r">77.9</b><span class="t a">13.5 41.5 (5)</span><i class="t e">13.3,13.4,13.4</i><span class="t f">8-9-10-3</span><span class="t gg">追込</span><i class="t k">クイーンミラコ(4)</i><span class="t l">古屋右1400m 4番</span><b class="t n">5着</b><span class="t o">5人 加藤利</span><b class="t p">54.0</b><i class="t q">先行馬 Ⅱ4のA</i><i class="t z">逃 4-6-0-5 1-3 3-6-4-28
先 2-5-0-21 4-6 4-1-3-30
好 4-4-0-28 7-9 2-3-1-25
差 2-1-5-30 10-12 2-5-2-25
追 1-3-2-26   4-8</i></div>
<div class="b" style="left:1186px;top:493px"><i class="t h">24/10/18 B 1.004</i><b class="t r">78.2</b><span class="t a">13.4 41.1</span><i class="t e">13.6,13.6</i><span class="t l">古屋右1500m 10番</span><b class="t n">8着</b><i class="t q">先行馬 知4A</i></div>
</body></html>
